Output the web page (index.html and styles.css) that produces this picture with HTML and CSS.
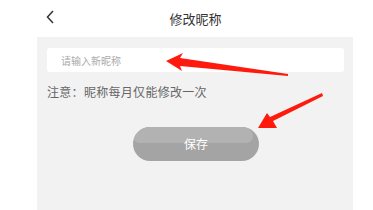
FILE: index.html
```html
<!DOCTYPE html>
<html>
<head>
  <meta charset="UTF-8">
  <title>修改昵称</title>
  <link rel="stylesheet" href="styles.css">
</head>
<body>
  <div class="page">
    <div class="header">
      <svg class="back" width="10" height="16" viewBox="0 0 10 16">
        <polyline points="7,2 1.5,8 7,14" fill="none" stroke="#333" stroke-width="1.5"/>
      </svg>
      <h1>修改昵称</h1>
    </div>
    <div class="panel">
      <div class="input-box">
        <input type="text" placeholder="请输入新昵称">
      </div>
      <p class="note">注意：昵称每月仅能修改一次</p>
      <button class="save-btn"><span>保存</span></button>
    </div>
  </div>

  <!-- 标注箭头 -->
  <svg class="marks" width="373" height="210" viewBox="0 0 373 210">
    <polygon points="166,61 183,53 180,58 288,74 288,76 180,66 182,71" fill="#ff1a0e"/>
    <polygon points="258,128 267,113 270,117 322,93 323,96 273,121 277,128" fill="#ff1a0e"/>
  </svg>
</body>
</html>
```

FILE: styles.css
```css
* {
  margin: 0;
  padding: 0;
  box-sizing: border-box;
  font-family: 'Noto Sans CJK SC', 'Noto Sans', sans-serif;
}

html, body {
  width: 373px;
  height: 210px;
  background: #ffffff;
  overflow: hidden;
}

.page {
  margin-left: 37px;
  width: 316px;
  height: 210px;
  display: flex;
  flex-direction: column;
}

.header {
  height: 37px;
  position: relative;
  display: flex;
  align-items: center;
  justify-content: center;
}

.back {
  position: absolute;
  left: 9px;
  top: 9px;
}

.header h1 {
  font-size: 13px;
  font-weight: 400;
  color: #333333;
  margin-left: 1px;
  margin-top: 0;
}

.panel {
  flex: 1;
  background: #f2f2f2;
  padding: 11px 9px 0 10px;
  display: flex;
  flex-direction: column;
}

.input-box {
  height: 24px;
  background: #ffffff;
  border-radius: 3px;
  display: flex;
  align-items: center;
  padding-left: 14px;
}

.input-box input {
  border: none;
  outline: none;
  background: transparent;
  font-size: 10px;
  color: #333333;
  width: 100%;
}

.input-box input::placeholder {
  color: #aaaaaa;
}

.note {
  margin-top: 12px;
  font-size: 12px;
  line-height: 16px;
  letter-spacing: 0.3px;
  color: #666666;
}

.save-btn {
  align-self: center;
  margin-top: 27px;
  margin-left: 1px;
  width: 126px;
  height: 34px;
  border: none;
  border-radius: 17px;
  background: #a4a4a4;
  position: relative;
  overflow: hidden;
  color: #ffffff;
  font-size: 12px;
  padding-bottom: 1px;
}

.save-btn::before {
  content: '';
  position: absolute;
  left: 0;
  top: 0;
  right: 6px;
  height: 16px;
  background: #b2b2b2;
  border-radius: 0 14px 10px 10px;
}

.save-btn span {
  position: relative;
}

.marks {
  position: fixed;
  left: 0;
  top: 0;
  pointer-events: none;
}
```
